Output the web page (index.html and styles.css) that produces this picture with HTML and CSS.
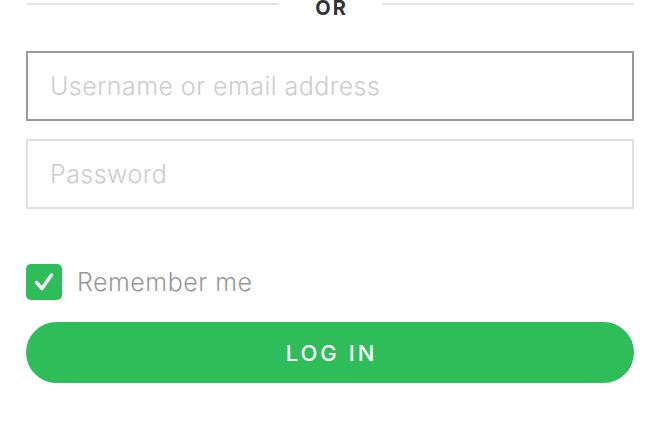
FILE: index.html
```html
<!DOCTYPE html>
<html>
<head>
<meta charset="utf-8">
<link rel="stylesheet" href="styles.css">
</head>
<body>
<form class="login">
  <div class="divider"><span class="line"></span><span class="or">OR</span><span class="line"></span></div>
  <input class="field field-active" type="text" placeholder="Username or email address">
  <input class="field" type="password" placeholder="Password">
  <label class="remember">
    <span class="check"><svg width="24" height="24" viewBox="0 0 24 24"><path d="M4.5 12.5 L10 18.5 L19.5 5" fill="none" stroke="#fff" stroke-width="3.4" stroke-linecap="round" stroke-linejoin="round"/></svg></span>
    <span class="remember-text">Remember me</span>
  </label>
  <button class="btn" type="button">LOG IN</button>
</form>
</body>
</html>
```
FILE: styles.css
```css
* { box-sizing: border-box; }
html, body { margin: 0; padding: 0; background: #fff; }
body { font-family: Inter, "Liberation Sans", sans-serif; }
.login {
  display: flex;
  flex-direction: column;
  padding: 0 26px;
  width: 660px;
}
.divider {
  display: flex;
  align-items: flex-start;
  height: 16px;
  gap: 34px;
}
.line { flex: 1; height: 2px; background: #e3e3e3; margin-top: 3px; }
.divider .line:first-child { margin-left: 1px; }
.or {
  font-size: 20px;
  font-weight: 700;
  letter-spacing: 2px;
  color: #333;
  line-height: 16px;
  padding-left: 2px;
}
.field {
  display: block;
  width: 100%;
  height: 70px;
  border: 2px solid #e0e0e0;
  border-radius: 0;
  padding: 0 22px;
  font-family: Inter, "Liberation Sans", sans-serif;
  font-size: 25px;
  font-weight: 300;
  letter-spacing: 0.45px;
  color: #333;
  outline: none;
  background: #fff;
  margin-top: 18px;
}
.field-active { margin-top: 35px; border-color: #9a9a9a; }
.field::placeholder { color: #cdcdcd; }
.remember {
  display: flex;
  align-items: center;
  gap: 15px;
  margin-top: 55px;
}
.check {
  width: 36px;
  height: 36px;
  border-radius: 5px;
  background: #2ebd59;
  display: flex;
  align-items: center;
  justify-content: center;
}
.remember-text {
  font-size: 25px;
  font-weight: 300;
  letter-spacing: 0.5px;
  color: #999;
}
.btn {
  margin-top: 22px;
  height: 61px;
  width: 100%;
  border: none;
  border-radius: 31px;
  background: #2ebd59;
  color: #fff;
  font-family: Inter, "Liberation Sans", sans-serif;
  font-size: 22px;
  font-weight: 500;
  letter-spacing: 3px;
  padding: 0 0 0 3px;
}
```
